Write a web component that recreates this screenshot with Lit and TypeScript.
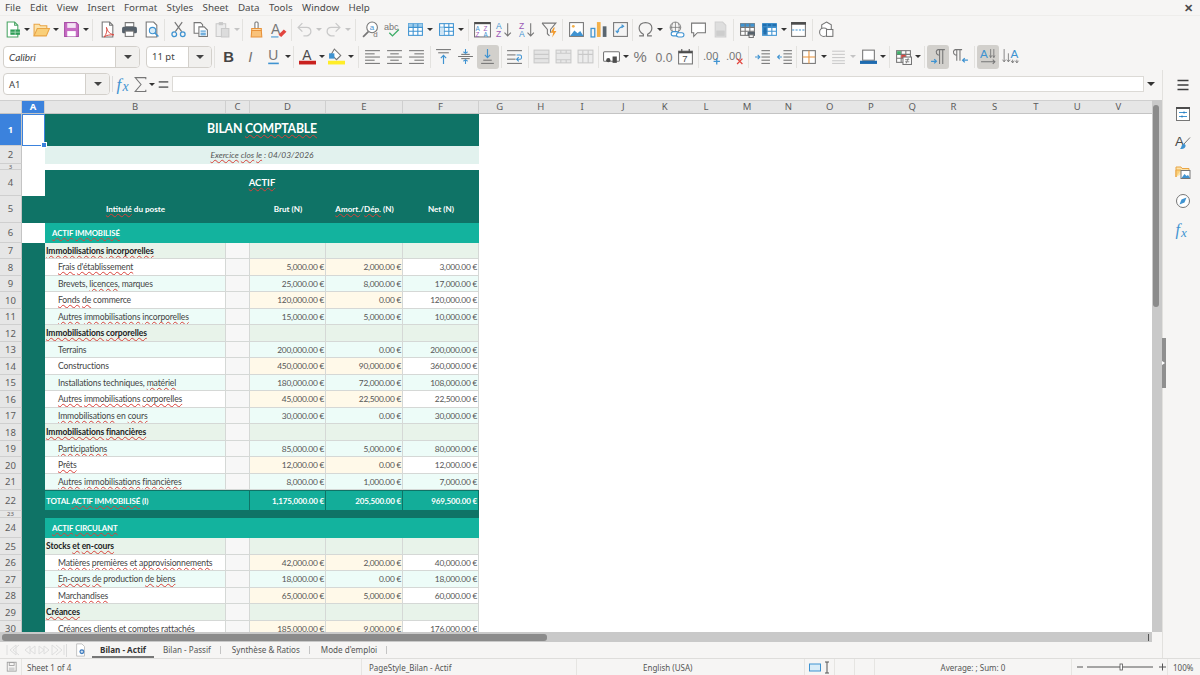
import { LitElement, html, css, svg } from "lit";
import { customElement } from "lit/decorators.js";

const GR = "#767676";
const LT = "#c9c9c9";
const BL = "#3f93d1";
const txt = (x: number, y: number, s: string, size: number, fill = GR, weight = 400, style = "normal", family = "Liberation Sans") =>
  svg`<text x=${x} y=${y} font-size=${size} fill=${fill} font-weight=${weight} font-style=${style} font-family="${family}, sans-serif">${s}</text>`;
const lines = (x1: number, x2: number, ys: number[], c = GR) =>
  ys.map((y) => svg`<path d="M${x1} ${y}H${x2}" stroke=${c}/>`);
const gridCells = (c: string, head = "") => svg`
  <rect x="1.5" y="2.5" width="13" height="11" fill="#fff" stroke=${c}/>
  ${head ? svg`<rect x="1.5" y="2.5" width="13" height="3" fill=${head}/>` : ""}
  <path d="M1.5 6h13M1.5 9.7h13M5.8 2.5v11M10.2 2.5v11" stroke=${c}/>`;

const icons: Record<string, unknown> = {
  new: svg`<path d="M3 1h7l3 3v11H3z" fill="#fff" stroke="#4aa564"/><path d="M10 1v3h3" fill="none" stroke="#4aa564"/><rect x="6" y="8" width="9" height="5" fill="#2f9d57"/><path d="M6 10.5h9M10.5 8v5" stroke="#bfe5cb" stroke-width=".7"/>`,
  open: svg`<path d="M1 14V3h5l1 1.5h6V7" fill="#fbe3ac" stroke="#e9a545"/><path d="M1 14l3-7h11.5l-3 7z" fill="#f9cf79" stroke="#e9a545"/>`,
  save: svg`<path d="M1.5 1.5h11l2 2v11h-13z" fill="#c76cc4" stroke="#a84fa6"/><rect x="4" y="2" width="8" height="4.5" fill="#f4e4f4"/><rect x="4" y="9.5" width="8" height="5" fill="#fff"/>`,
  pdf: svg`<path d="M3 1h7l3 3v11H3z" fill="#fff" stroke=${GR}/><path d="M10 1v3h3" fill="none" stroke=${GR}/><path d="M7 6c1 3 2 6 7 7-3 0-7 0-9 2 2-3 3-6 2-9z" fill="none" stroke="#d9453d" stroke-width=".9"/>`,
  print: svg`<path d="M4 1.5h8v4H4z" fill="#fff" stroke=${GR}/><rect x="1" y="5.5" width="14" height="6" rx="1.5" fill="#56616b"/><rect x="4" y="9.5" width="8" height="5" fill="#fff" stroke=${GR}/>`,
  preview: svg`<path d="M3 1h7l3 3v11H3z" fill="#fff" stroke=${GR}/><circle cx="9" cy="9" r="3" fill="#d8ecf8" stroke=${BL}/><path d="M11 11l3.5 3.5" stroke=${BL} stroke-width="1.4"/>`,
  cut: svg`<path d="M5 10L11.5 1M11 10L4.5 1" stroke=${GR} stroke-width="1.1"/><circle cx="4" cy="12.5" r="2.2" fill="none" stroke=${BL} stroke-width="1.2"/><circle cx="12" cy="12.5" r="2.2" fill="none" stroke=${BL} stroke-width="1.2"/>`,
  copy: svg`<path d="M2 1.5h6l2 2v8H2z" fill="#fff" stroke=${GR}/><path d="M6.5 5.5h5l3 3v6h-8z" fill="#fff" stroke=${GR}/>${lines(8, 13, [9.5, 11.5, 13], BL)}`,
  paste: svg`<path d="M2 2.5h9v12H2z" fill="#ececec" stroke=${LT}/><rect x="4.5" y="1" width="4" height="3" fill=${LT}/><path d="M7 7h7v8H7z" fill="#dcdcdc" stroke=${LT}/>`,
  brush: svg`<rect x="6.5" y="1" width="3" height="6" rx="1" fill="#fff" stroke=${GR}/><path d="M3.5 7h9v2h-9z" fill="#fbd9a8" stroke="#e8923a"/><path d="M3.5 9h9l.5 6H3z" fill="#f9c27a" stroke="#e8923a"/>`,
  clear: svg`${txt(1, 12, "A", 13, GR)}<path d="M8 13l5-5 2.5 2-5 5z" fill="#e2453e"/><path d="M1 15h7" stroke=${BL}/>`,
  undo: svg`<path d="M6 2L2 6l4 4M2.5 6H10c3 0 4 2 4 4s-2 4-4 4H7" fill="none" stroke=${LT} stroke-width="1.2"/>`,
  redo: svg`<path d="M10 2l4 4-4 4M13.5 6H6C3 6 2 8 2 10s2 4 4 4h3" fill="none" stroke=${LT} stroke-width="1.2"/>`,
  find: svg`<circle cx="9.5" cy="6" r="5" fill="#fff" stroke=${GR}/><path d="M6 10l-5 5" stroke=${GR} stroke-width="1.6"/>${txt(7.3, 8, "a", 7.5, BL)}${txt(10.5, 15.5, "d", 7.5, GR)}`,
  spell: svg`${txt(0, 8, "abc", 8.5, GR)}<path d="M5 11l3 3 6-6" fill="none" stroke="#3fae69" stroke-width="1.3"/>`,
  rows: svg`${gridCells("#3f93d1", "#9ccbea")}`,
  cols: svg`${gridCells("#3f93d1")}<rect x="2" y="6" width="3.5" height="7" fill="#cfe5f5"/>`,
  sortgrid: svg`<rect x=".5" y="1.5" width="15" height="13.5" fill="#fff" stroke=${GR}/><rect x=".5" y="1" width="15" height="2" fill="#4d4d4d"/>${txt(1.5, 9, "A", 6, BL)}${txt(9, 9, "Z", 6, "#9b59b6")}${txt(1.5, 14.8, "Z", 6, "#9b59b6")}${txt(9, 14.8, "A", 6, BL)}`,
  sasc: svg`${txt(0, 7.5, "A", 8, BL)}${txt(0, 15, "Z", 8, "#9b59b6")}<path d="M11 2v12M8 11l3 3 3-3" fill="none" stroke=${GR}/>`,
  sdesc: svg`${txt(0, 7.5, "Z", 8, "#9b59b6")}${txt(0, 15, "A", 8, BL)}<path d="M11 2v12M8 11l3 3 3-3" fill="none" stroke=${GR}/>`,
  filter: svg`<path d="M1 2h13L9 8v3" fill="none" stroke=${GR}/><path d="M1 2l5 6v4l2 2" fill="none" stroke=${GR}/><path d="M12 6l-3 5h2.5l-1 4.5 4-6h-2.5l1-3.5z" fill="#f29b2e"/>`,
  image: svg`<rect x="1.5" y="1.5" width="13" height="13" fill="#fff" stroke=${GR}/><circle cx="5" cy="5" r="1.3" fill="#f3b04a"/><path d="M2 14l4-5 3 2.5 2.5-2 3 4.5z" fill=${BL}/>`,
  chart: svg`<rect x="1" y="7" width="3.5" height="8" fill="none" stroke=${BL} stroke-width="1.2"/><rect x="6.5" y="1" width="3.5" height="14" fill="#f3b04a"/><rect x="12" y="5" width="3.5" height="10" fill="#5a6670"/>`,
  pivot: svg`<rect x="1.5" y="1.5" width="13" height="13" fill="#f4f4f4" stroke=${GR}/><path d="M5 11c0-3 3-6 6-6M9 3.5L11 5 9 6.5M3.5 9L5 11l1.5-2" fill="none" stroke=${BL}/>`,
  omega: svg`<path d="M2 14h4v-1.5C3.5 11 2 9 2 6.5 2 3.5 4.5 1.5 8 1.5s6 2 6 5c0 2.5-1.5 4.5-4 6V14h4" fill="none" stroke=${GR} stroke-width="1.1"/>`,
  link: svg`<circle cx="7" cy="6" r="5" fill="none" stroke=${GR} stroke-width=".8"/><path d="M2 6h10M7 1v10M4.5 2c-1.5 2.5-1.5 5.5 0 8M9.5 2c1.5 2.5 1.5 5.5 0 8" fill="none" stroke=${GR} stroke-width=".7"/><rect x="3" y="10" width="7" height="4" rx="2" fill="#fff" stroke=${BL}/><rect x="8" y="11" width="7" height="4" rx="2" fill="#fff" stroke=${BL}/>`,
  comment: svg`<path d="M1.5 2h13v9H7l-3.5 3.5V11h-2z" fill="#fff" stroke=${GR}/>`,
  headers: svg`<path d="M3 1h7l3 3v11H3z" fill="#dedede" stroke="#d0d0d0"/><rect x="4" y="9" width="8" height="5" fill="#cdcdcd"/>`,
  printarea: svg`${gridCells(GR, "#3f93d1")}<rect x="8" y="10" width="7" height="4" rx="1" fill="#56616b"/><rect x="9.5" y="13" width="4" height="2.5" fill="#fff" stroke=${GR}/>`,
  freeze: svg`${gridCells("#3f93d1", "#1f6fb0")}<rect x="2" y="6" width="3.5" height="7" fill="#1f6fb0"/>`,
  split: svg`<rect x="1.5" y="1.5" width="13" height="13" fill="#fff" stroke=${GR}/><rect x="1" y="1" width="14" height="2.5" fill="#4d4d4d"/><path d="M2 8.5h12" stroke=${BL} stroke-dasharray="2 1.2"/>`,
  shapes: svg`<path d="M8 1l4.5 2.5v5L8 11 3.5 8.5v-5z" fill="#fff" stroke=${GR}/><circle cx="5.5" cy="10.5" r="4" fill="#fff" stroke=${GR}/><rect x="8" y="8" width="6" height="6.5" fill="#fff" stroke=${GR}/>`,
  bold: svg`${txt(3, 13.5, "B", 14, "#444", 700)}`,
  italic: svg`${txt(5, 13.5, "I", 14, GR, 400, "italic")}`,
  under: svg`${txt(3, 11.5, "U", 13, GR)}<path d="M3 14.5h10" stroke=${BL} stroke-width="1.5"/>`,
  fcolor: svg`${txt(3, 11, "A", 13, "#4a4a4a")}<rect x="0" y="12" width="16" height="3.5" fill="#c9211e"/>`,
  bcolor: svg`<path d="M6 1l6 6-4 4-5-5z" fill="#fff" stroke=${GR}/><path d="M1 5h5v5H1z" fill=${BL}/><rect x="0" y="12" width="16" height="3.5" fill="#ffed27"/>`,
  al: svg`${lines(1, 15, [2.5, 8.5, 14.5])}${lines(1, 10, [5.5, 11.5])}`,
  ac: svg`${lines(1, 15, [2.5, 8.5, 14.5])}${lines(4, 12, [5.5, 11.5])}`,
  ar: svg`${lines(1, 15, [2.5, 8.5, 14.5])}${lines(6, 15, [5.5, 11.5])}`,
  vt: svg`${lines(1, 15, [1.5])}${lines(3, 13, [4.5])}<path d="M8 15V7M5.5 9.5L8 7l2.5 2.5" fill="none" stroke=${BL} stroke-width="1.1"/>`,
  vm: svg`${lines(1, 15, [8])}${lines(4, 12, [6, 10])}<path d="M8 1v4M6 3.5L8 5l2-1.5M8 15v-4M6 12.5L8 11l2 1.5" fill="none" stroke=${BL}/>`,
  vb: svg`${lines(2, 14, [14.5])}${lines(4, 12, [11.5])}<path d="M8 1v8M5.5 6.5L8 9l2.5-2.5" fill="none" stroke=${BL} stroke-width="1.1"/>`,
  wrap: svg`${lines(1, 15, [2.5, 14.5])}${lines(1, 9, [6.5, 10.5])}<path d="M10 6.5h3.5c1.5 0 1.5 4 0 4H10M12 8.5l-2 2 2 2" fill="none" stroke=${BL}/>`,
  m1: svg`<rect x="1" y="2" width="14" height="12" fill="#e4e4e4" stroke=${LT}/><path d="M1 6h14M1 10h14" stroke=${LT}/>`,
  m2: svg`<rect x="1" y="2" width="14" height="12" fill="#e8e8e8" stroke=${LT}/><path d="M5.5 2v3M10.5 2v3M5.5 11v3M10.5 11v3M1 5h14M1 11h14" stroke=${LT}/>`,
  m3: svg`<rect x="1" y="2" width="14" height="12" fill="#ececec" stroke=${LT}/><path d="M5.5 2v12M10.5 2v12M1 6h14" stroke=${LT}/>`,
  curr: svg`<rect x=".5" y="3.5" width="15" height="9" rx="1" fill="#fff" stroke=${GR}/><circle cx="5" cy="11.5" r="2" fill="#4d4d4d"/><rect x="9" y="8" width="4" height="6" fill="#4d4d4d"/>`,
  pct: svg`${txt(0.5, 13, "%", 14, GR)}`,
  num: svg`<g transform="translate(0 1)">${txt(0.5, 12, "0.0", 11.5, GR)}</g>`,
  date: svg`<rect x="1.5" y="3" width="13" height="12" fill="#fff" stroke=${GR}/><rect x="1.5" y="3" width="13" height="2" fill="#4d4d4d"/><path d="M4.5 1v3M11.5 1v3" stroke="#4d4d4d"/>${txt(5, 13.5, "7", 9, "#4d4d4d")}`,
  dadd: svg`${txt(-1, 11, ".00", 10.5, GR)}<path d="M12 9.5v6M9 12.5h6" stroke=${BL} stroke-width="1.2"/>`,
  drem: svg`${txt(-1, 11, ".00", 10.5, GR)}<path d="M9.5 10l5 5M14.5 10l-5 5" stroke="#e2453e" stroke-width="1.2"/>`,
  ind: svg`${lines(7, 15, [2.5, 5.5, 8.5, 11.5, 14.5])}<path d="M1 8.5h4M3.5 6.5l2 2-2 2" fill="none" stroke=${BL}/>`,
  outd: svg`${lines(7, 15, [2.5, 5.5, 8.5, 11.5, 14.5])}<path d="M5.5 8.5h-4M3.5 6.5l-2 2 2 2" fill="none" stroke=${BL}/>`,
  border: svg`<rect x="1.5" y="2.5" width="12" height="12" fill="#fff" stroke=${GR}/><path d="M7.5 2.5v12M1.5 8.5h12" stroke="#e8923a"/>`,
  bstyle: svg`${lines(2, 14, [3, 6, 9, 12, 14.5], LT)}`,
  bcol: svg`<rect x="2.5" y="2" width="11" height="9.5" fill="#fff" stroke=${GR}/><rect x="0" y="12" width="16" height="3" fill="#1e6bb0"/>`,
  cond: svg`${gridCells(GR)}<rect x="2" y="3" width="3.5" height="3" fill="#3fae69"/><rect x="6" y="6.5" width="4" height="3" fill="#e2453e"/><rect x="7.5" y="8.5" width="8" height="7" fill="#fff" stroke=${GR}/><path d="M9.5 11h4M9.5 13h4M10.5 14.5l2-5" stroke=${GR} stroke-width=".8"/>`,
  ltr: svg`<path d="M9 15V1.5H8C5.5 1.5 5 5 7.5 6.5H9M12 15V1.5M7 1.5h7" fill="none" stroke=${GR}/><path d="M1 12.5h5M4 10.5l2 2-2 2" fill="none" stroke=${BL} stroke-width="1.2"/>`,
  rtl: svg`<path d="M4.5 12V1.5h-1C1 1.5.5 5 3 6.5h1.5M7.5 12V1.5M2.5 1.5h7" fill="none" stroke=${GR}/><path d="M15 11.5h-5M12 9.5l-2 2 2 2" fill="none" stroke=${BL} stroke-width="1.2"/>`,
  tdir: svg`${txt(0, 9, "A", 11, BL)}<path d="M10 1v8M13 1v8M9 7l1 2 1-2M12 7l1 2 1-2" fill="none" stroke=${GR} stroke-width=".8"/><path d="M1 13h13M12 11l2 2-2 2" fill="none" stroke=${GR}/>`,
  vert: svg`${txt(8, 9.5, "A", 11, BL)}<path d="M2 1v12M6 5v8M10 11v3M14 11v3M.5 11L2 13l1.5-2M4.5 11L6 13l1.5-2M8.5 12l1.5 2 1.5-2M12.5 12l1.5 2 1.5-2" fill="none" stroke=${GR} stroke-width=".8"/>`,
  burger: svg`<path d="M2.5 3.5h11M2.5 8h11M2.5 12.5h11" stroke="#3d3d3d" stroke-width="1.5"/>`,
  props: svg`<rect x="1.5" y="1.5" width="13" height="13" fill="#fff" stroke=${GR}/><rect x="1" y="1" width="14" height="2" fill="#4d4d4d"/><path d="M4 6.5h8M4 10.5h8" stroke=${BL}/><path d="M9 5.5v2M7 9.5v2" stroke="#1f6fb0"/>`,
  styles: svg`${txt(0, 11, "A", 13.5, "#4a4a4a")}<path d="M15 2.5L9 9" stroke=${GR}/><path d="M9 8.5c-3 1-2 4-4 5.5 3 .5 6-1 5.5-4z" fill=${BL}/>`,
  gallery: svg`<path d="M1 13V3h5l1 1.5h7V6" fill="#fbe3ac" stroke="#e9a545"/><path d="M1 13V6h5" fill="#f9cf79" stroke="#e9a545"/><rect x="6" y="6.5" width="9" height="8" fill="#fff" stroke=${GR}/><path d="M6.5 14l3-4 2 2 1.5-1 2 3z" fill=${BL}/>`,
  nav: svg`<circle cx="8" cy="8" r="6.5" fill="#fff" stroke=${GR}/><path d="M11.5 4.5L9.5 9.5 4.5 11.5l2-5z" fill=${BL}/>`,
  fx: svg`${txt(0.5, 13, "f", 16, BL, 400, "italic", "Liberation Serif")}${txt(6, 14.5, "x", 13, BL, 400, "italic", "Liberation Serif")}`,
  sigma: svg`<path d="M13 3V1.5H3L8.5 8 3 14.5h10V13" fill="none" stroke=${GR}/>`,
  eq: svg`<path d="M3.5 5.5h9M3.5 10.5h9" stroke=${GR} stroke-width="1.6"/>`,
  doc: svg`<rect x="1.5" y="1.5" width="11" height="11" fill="none" stroke="#9a9a9a"/><rect x="4" y="2" width="6" height="3.5" fill="none" stroke="#9a9a9a"/><rect x="3.5" y="8" width="7" height="4.5" fill="#d0d0d0"/>`,
  sheetadd: svg`<path d="M3 1h6l3 3v11H3z" fill="#fff" stroke="#bcbcbc"/><circle cx="9" cy="10" r="2.8" fill="#3b79bd"/><path d="M7.5 10h3M9 8.5v3" stroke="#fff" stroke-width=".9"/>`,
};

const toolbarOne: (string | number)[] = [
  "new", "d", "open", "d", "save", "d", 6.5, "pdf", "print", "preview", 5, "cut", "copy", "paste", "x", 4.5,
  "brush", "clear", 4, "undo", "x", "redo", "x", 7, "find", "spell", 1, "rows", "d", 2, "cols", "d", 6,
  "sortgrid", "sasc", 1, "sdesc", "filter", 5, "image", "chart", "pivot", 3, "omega", "d", 1.5, "link",
  "comment", "headers", 5, "printarea", "freeze", "d", "split", 5.5, "shapes",
];
const toolbarTwo: (string | number)[] = [
  5, "bold", 1, "italic", "under", "d", 4.5, "fcolor", "d", "bcolor", "d", 6.5, "al", "ac", "ar", 5, "vt", "vm",
  "vb", 5, "wrap", 5, "m1", "m2", "m3", 4, "curr", "d", "pct", "num", "date", 5, "dadd", 1, "drem", 5, "ind",
  "outd", 3, "border", "d", "bstyle", "x", "bcol", "d", 5.5, "cond", "d", 5.5, "ltr", "rtl", 6, "tdir", "vert",
];
const active = ["vb", "ltr", "tdir"];

type Row = { n: number; h: number; kind: string; label?: string; vals?: string[]; aDark?: boolean };

const item = (n: number, label: string, ...vals: string[]): Row => ({ n, h: 16.5, kind: "item", label, vals });
const group = (n: number, label: string): Row => ({ n, h: 16.5, kind: "group", label });

const rows: Row[] = [
  { n: 1, h: 31.5, kind: "title", label: "BILAN ~COMPTABLE~" },
  { n: 2, h: 18.3, kind: "sub", label: "~Exercice~ ~clos~ ~le~ : 04/03/2026" },
  { n: 3, h: 6.5, kind: "blank" },
  { n: 4, h: 25.4, kind: "actif", label: "~ACTIF~" },
  { n: 5, h: 27.3, kind: "head", label: "~Intitulé~ du poste", vals: ["Brut (N)", "~Amort.~/~Dép.~ (N)", "Net (N)"] },
  { n: 6, h: 20, kind: "sec", label: "~ACTIF~ ~IMMOBILISÉ~" },
  group(7, "~Immobilisations~ ~incorporelles~"),
  item(8, "~Frais~ ~d'établissement~", "5,000.00 €", "2,000.00 €", "3,000.00 €"),
  item(9, "Brevets, ~licences~, marques", "25,000.00 €", "8,000.00 €", "17,000.00 €"),
  item(10, "~Fonds~ ~de~ commerce", "120,000.00 €", "0.00 €", "120,000.00 €"),
  item(11, "~Autres~ ~immobilisations~ ~incorporelles~", "15,000.00 €", "5,000.00 €", "10,000.00 €"),
  group(12, "~Immobilisations~ ~corporelles~"),
  item(13, "Terrains", "200,000.00 €", "0.00 €", "200,000.00 €"),
  item(14, "Constructions", "450,000.00 €", "90,000.00 €", "360,000.00 €"),
  item(15, "Installations techniques, ~matériel~", "180,000.00 €", "72,000.00 €", "108,000.00 €"),
  item(16, "~Autres~ ~immobilisations~ ~corporelles~", "45,000.00 €", "22,500.00 €", "22,500.00 €"),
  item(17, "~Immobilisations~ en ~cours~", "30,000.00 €", "0.00 €", "30,000.00 €"),
  group(18, "~Immobilisations~ ~financières~"),
  item(19, "~Participations~", "85,000.00 €", "5,000.00 €", "80,000.00 €"),
  item(20, "~Prêts~", "12,000.00 €", "0.00 €", "12,000.00 €"),
  item(21, "~Autres~ ~immobilisations~ ~financières~", "8,000.00 €", "1,000.00 €", "7,000.00 €"),
  { n: 22, h: 20.5, kind: "total", label: "TOTAL ~ACTIF~ ~IMMOBILISÉ~ (I)", vals: ["1,175,000.00 €", "205,500.00 €", "969,500.00 €"] },
  { n: 23, h: 6.7, kind: "bar" },
  { n: 24, h: 20.6, kind: "sec", label: "~ACTIF~ ~CIRCULANT~", aDark: true },
  group(25, "Stocks ~et~ ~en-cours~"),
  item(26, "~Matières~ ~premières~ ~et~ ~approvisionnements~", "42,000.00 €", "2,000.00 €", "40,000.00 €"),
  item(27, "~En-cours~ ~de~ production ~de~ ~biens~", "18,000.00 €", "0.00 €", "18,000.00 €"),
  item(28, "~Marchandises~", "65,000.00 €", "5,000.00 €", "60,000.00 €"),
  group(29, "~Créances~"),
  item(30, "~Créances~ clients ~et~ ~comptes~ ~rattachés~", "185,000.00 €", "9,000.00 €", "176,000.00 €"),
];

const letters = "GHIJKLMNOPQRSTUV".split("");

@customElement("app-root")
export class AppRoot extends LitElement {
  static styles = css`
    :host {
      display: block;
      width: 1200px;
      height: 675px;
      font-family: "Noto Sans", sans-serif;
      color: #3d3d3d;
    }
    .app {
      height: 675px;
      display: flex;
      flex-direction: column;
      overflow: hidden;
      background: #f6f5f4;
    }
    .ic {
      width: 17px;
      height: 17px;
      display: block;
      overflow: visible;
    }
    .menu {
      height: 16px;
      display: flex;
      align-items: center;
      padding-left: 5px;
      gap: 9.3px;
      font-size: 9.8px;
      color: #4a4a4a;
      border-bottom: 1px solid #eeedeb;
      box-sizing: border-box;
    }
    .close {
      margin-left: auto;
      margin-right: 7px;
      font-size: 11px;
      font-weight: 700;
    }
    .tb {
      display: flex;
      align-items: center;
      flex-shrink: 0;
    }
    .tb1 {
      height: 27px;
      padding-left: 1px;
    }
    .tb2 {
      height: 27px;
      padding-left: 3px;
    }
    .btn {
      width: 22px;
      height: 24px;
      display: flex;
      align-items: center;
      justify-content: center;
      border-radius: 3px;
      flex-shrink: 0;
    }
    .btn.on {
      background: #d2d0cc;
    }
    .dd {
      width: 7.5px;
      height: 24px;
      display: flex;
      align-items: center;
      justify-content: center;
      flex-shrink: 0;
    }
    .dd::after {
      content: "";
      border-left: 3px solid transparent;
      border-right: 3px solid transparent;
      border-top: 3.5px solid #333;
    }
    .dd.off::after {
      border-top-color: #c4c4c4;
    }
    .sep {
      display: flex;
      justify-content: center;
      flex-shrink: 0;
    }
    .sep.line::after {
      content: "";
      width: 1px;
      height: 22px;
      background: #e3e2df;
    }
    .combo {
      height: 22px;
      box-sizing: border-box;
      border: 1px solid #d3d0cb;
      border-radius: 4px;
      background: #fff;
      display: flex;
      align-items: center;
      font-size: 9.5px;
      overflow: hidden;
      flex-shrink: 0;
      color: #444;
    }
    .combo span {
      flex: 1;
      padding-left: 5px;
    }
    .combo .arrow {
      flex: none;
      padding: 0;
      height: 100%;
      background: #f1f0ee;
      border-left: 1px solid #d3d0cb;
      display: flex;
      align-items: center;
      justify-content: center;
    }
    .combo .arrow::after {
      content: "";
      border-left: 4px solid transparent;
      border-right: 4px solid transparent;
      border-top: 4.5px solid #444;
    }
    .font {
      width: 137px;
      margin-right: 6px;
      font-family: "Lato", sans-serif;
      font-style: italic;
      font-size: 10px;
    }
    .font .arrow {
      width: 23px;
    }
    .size {
      width: 66px;
    }
    .size .arrow {
      width: 22px;
    }
    .main {
      flex: 1;
      min-height: 0;
      display: flex;
    }
    .left {
      width: 1162px;
      display: flex;
      flex-direction: column;
    }
    .fbar {
      height: 30px;
      box-sizing: border-box;
      display: flex;
      align-items: center;
      padding: 0 0 2px 3px;
      flex-shrink: 0;
    }
    .name {
      width: 107px;
      margin-right: 2px;
    }
    .name .arrow {
      width: 23px;
    }
    .fbar .sep {
      width: 1px;
      height: 16px;
      background: #ddd;
      margin-right: 3px;
    }
    .fbtn {
      width: 16px;
      display: flex;
      justify-content: center;
    }
    .input {
      width: 972px;
      height: 16px;
      box-sizing: border-box;
      background: #fff;
      border: 1px solid #dcdad6;
    }
    .fdrop {
      width: 15px;
      display: flex;
      justify-content: center;
    }
    .fdrop::after {
      content: "";
      border-left: 4px solid transparent;
      border-right: 4px solid transparent;
      border-top: 4px solid #333;
    }
    .view {
      height: 532px;
      display: flex;
      flex-shrink: 0;
    }
    .sheet {
      width: 1152px;
      overflow: hidden;
      background: #fff;
      font-family: "Lato", sans-serif;
    }
    .cols,
    .row {
      display: grid;
      grid-template-columns: 22px 23px 181px 24px 76px 77px 76px 1fr;
    }
    .cols {
      height: 14px;
      background: #e6e6e6;
      font-family: "Noto Sans", sans-serif;
      font-size: 9.5px;
      color: #5c5c5c;
      box-sizing: border-box;
      border-top: 1px solid #cfcfcf;
      border-bottom: 1px solid #c4c4c4;
    }
    .cols > div {
      border-right: 1px solid #cfcfcf;
      text-align: center;
      line-height: 12px;
      box-sizing: border-box;
    }
    .cols .sel {
      background: #3b82dd;
      color: #fff;
      font-weight: 700;
    }
    .more {
      display: grid;
      grid-template-columns: repeat(16, 41.25px) 1fr;
      border-right: 0 !important;
    }
    .rows {
      position: relative;
    }
    .row > div {
      box-sizing: border-box;
      display: flex;
      align-items: center;
      min-width: 0;
      white-space: nowrap;
      overflow: hidden;
    }
    .row .rh {
      background: #e6e6e6;
      border-right: 1px solid #c4c4c4;
      border-bottom: 1px solid #cfcfcf;
      justify-content: center;
      font-family: "Noto Sans", sans-serif;
      font-size: 9.5px;
      color: #5c5c5c;
    }
    .row .rh.tiny {
      font-size: 6px;
      line-height: 6px;
    }
    .row .rh.sel {
      background: #3b82dd;
      color: #fff;
      font-weight: 700;
    }
    .dark {
      background: #0f7366;
    }
    .teal {
      background: #13b39e;
    }
    .wide {
      grid-column: span 5;
    }
    .white {
      color: #fff;
      font-weight: 700;
    }
    .title {
      font-size: 12.3px;
      letter-spacing: -0.2px;
      justify-content: center;
      padding-bottom: 2px;
    }
    .sub {
      background: #e2f2ee;
      justify-content: center;
      font-size: 8.4px;
      font-style: italic;
      color: #555;
    }
    .actif {
      font-size: 9.5px;
      justify-content: center;
    }
    .hcell {
      font-size: 8.1px;
      justify-content: center;
    }
    .sec {
      font-size: 7.8px;
      letter-spacing: -0.1px;
      padding-left: 7px;
    }
    .row .cell {
      font-size: 8.6px;
      letter-spacing: -0.15px;
      color: #444;
      border-bottom: 1px solid #d5d8d6;
      border-right: 1px solid #d5d8d6;
    }
    .cell.lab {
      padding-left: 13px;
    }
    .row .cell.grp {
      background: #e8f3ea;
      color: #222;
      font-weight: 700;
      font-size: 8.5px;
      letter-spacing: -0.1px;
      padding-left: 1px;
    }
    .cell.fill {
      background: #e8f3ea;
    }
    .cell.c {
      background: #f7f7f7;
    }
    .row .cell.num {
      justify-content: flex-end;
      padding-right: 1px;
      font-size: 8.4px;
      letter-spacing: -0.25px;
      color: #555;
    }
    .mint {
      background: #edfcf8;
    }
    .cream {
      background: #fff9e9;
    }
    .plain {
      background: #fff;
    }
    .row .tot {
      background: #13ad99;
      color: #fff;
      font-weight: 700;
      font-size: 8px;
      letter-spacing: -0.15px;
      border-top: 1.5px solid #0f7366;
      border-bottom: 1.5px solid #0f7366;
      border-right: 1.5px solid #0f7366;
    }
    .tot.lab2 {
      padding-left: 1px;
      grid-column: span 2;
    }
    .tot.num {
      justify-content: flex-end;
      padding-right: 1px;
    }
    .bad {
      text-decoration: underline wavy #d8413a 1px;
      text-decoration-skip-ink: none;
      text-underline-offset: 0.5px;
    }
    .cursor {
      position: absolute;
      left: 22px;
      top: 0;
      width: 23px;
      height: 31.5px;
      box-sizing: border-box;
      border: 1px solid #3b82dd;
    }
    .cursor::after {
      content: "";
      position: absolute;
      right: -3px;
      bottom: -3px;
      width: 4px;
      height: 4px;
      background: #3b82dd;
      border: 1px solid #fff;
    }
    .vs {
      width: 10px;
      background: #c9c9c9;
      padding: 5px 3px 325px 1px;
      box-sizing: border-box;
    }
    .vs div {
      height: 100%;
      background: #8b8b8b;
      border-radius: 3px;
    }
    .hs {
      width: 1152px;
      height: 10px;
      flex-shrink: 0;
      background: #c9c9c9;
      padding: 2px 0 1px 2px;
      box-sizing: border-box;
      display: flex;
      justify-content: space-between;
    }
    .hs .thumb {
      width: 545px;
      background: #8b8b8b;
      border-radius: 3px;
    }
    .hs .tick {
      width: 1px;
      margin-right: 3px;
      background: #555;
    }
    .tabs {
      height: 16px;
      flex-shrink: 0;
      display: flex;
      align-items: center;
      font-size: 8.1px;
      color: #555;
    }
    .navs {
      margin-left: 6px;
      width: 60px;
      height: 14px;
      display: block;
    }
    .tabsep {
      width: 1px;
      height: 13px;
      background: #dcdcdc;
    }
    .tabs .ic {
      width: 14px;
      height: 14px;
      margin: 0 4px 0 7px;
    }
    .tab {
      height: 16px;
      box-sizing: border-box;
      line-height: 15px;
      padding: 0 9px;
      position: relative;
    }
    .tab.on {
      color: #333;
      font-weight: 700;
      padding: 0 8px;
      border-bottom: 2px solid #777;
    }
    .tab.rule {
      padding-right: 10px;
      margin-right: 2px;
    }
    .tab.rule::after {
      content: "";
      position: absolute;
      right: 0;
      top: 4px;
      width: 1px;
      height: 8px;
      background: #c4c4c4;
    }
    .side {
      flex: 1;
      border-left: 1px solid #e2e1de;
      display: flex;
      flex-direction: column;
      align-items: center;
      gap: 13px;
      padding-top: 7px;
      position: relative;
    }
    .side .ic {
      width: 16px;
      height: 16px;
      margin-left: 3px;
    }
    .grip {
      position: absolute;
      left: -1px;
      top: 268px;
      width: 4px;
      height: 50px;
      background: #8f8f8f;
      display: flex;
      align-items: center;
    }
    .grip::after {
      content: "";
      border-left: 3px solid #fff;
      border-top: 2.5px solid transparent;
      border-bottom: 2.5px solid transparent;
    }
    .status {
      height: 17px;
      flex-shrink: 0;
      display: flex;
      border-top: 1px solid #dedddb;
      box-sizing: border-box;
      font-size: 8px;
      color: #555;
    }
    .status > div {
      box-sizing: border-box;
      border-right: 1px solid #e6e5e2;
      display: flex;
      align-items: center;
      white-space: nowrap;
    }
    .status .ic {
      width: 13px;
      height: 13px;
    }
    .s1 {
      width: 22px;
      padding-left: 6px;
    }
    .s2 {
      width: 340px;
      padding-left: 5px;
    }
    .s3 {
      width: 215px;
      padding-left: 7px;
    }
    .s4 {
      width: 228px;
      padding-left: 66px;
    }
    .s5 {
      width: 30px;
      justify-content: center;
    }
    .s6 {
      width: 20px;
    }
    .s7 {
      width: 197px;
      justify-content: center;
    }
    .s8 {
      width: 96px;
      padding-left: 4px;
    }
    .s8 svg {
      width: 90px;
      height: 10px;
      display: block;
    }
    .s9 {
      flex: 1;
      border-right: 0 !important;
      padding-left: 5px;
    }
    .s5 svg {
      width: 24px;
      height: 13px;
      display: block;
    }
  `;

  private icon(name: string) {
    return html`<svg class="ic" viewBox="0 0 16 16">${icons[name]}</svg>`;
  }

  // numbers in a toolbar list are spacers, wide ones carry a divider
  private toolbar(list: (string | number)[]) {
    return list.map((it) => {
      if (typeof it === "number") {
        return html`<div class="sep ${it >= 3 ? "line" : ""}" style="width:${it}px"></div>`;
      }
      if (it === "d") return html`<div class="dd"></div>`;
      if (it === "x") return html`<div class="dd off"></div>`;
      return html`<div class="btn ${active.includes(it) ? "on" : ""}">${this.icon(it)}</div>`;
    });
  }

  // words between ~ get the spell check underline
  private spell(s = "") {
    return html`<span
      >${s.split(/(~[^~]+~)/).map((p) =>
        p.startsWith("~") ? html`<span class="bad">${p.slice(1, -1)}</span>` : p
      )}</span
    >`;
  }

  private rowCells(r: Row) {
    switch (r.kind) {
      case "title":
        return html`<div></div><div class="wide dark white title">${this.spell(r.label)}</div>`;
      case "sub":
        return html`<div></div><div class="wide sub">${this.spell(r.label)}</div>`;
      case "blank":
        return html`<div></div><div class="wide"></div>`;
      case "actif":
        return html`<div></div><div class="wide dark white actif">${this.spell(r.label)}</div>`;
      case "head":
        return html`<div class="dark"></div>
          <div class="dark white hcell">${this.spell(r.label)}</div>
          <div class="dark"></div>
          ${r.vals!.map((v) => html`<div class="dark white hcell">${this.spell(v)}</div>`)}`;
      case "sec":
        return html`<div class=${r.aDark ? "dark" : ""}></div>
          <div class="wide teal white sec">${this.spell(r.label)}</div>`;
      case "group":
        return html`<div class="dark"></div>
          <div class="cell grp">${this.spell(r.label)}</div>
          <div class="cell c"></div>
          <div class="cell fill"></div>
          <div class="cell fill"></div>
          <div class="cell fill"></div>`;
      case "item": {
        const even = r.n % 2 === 0;
        const [a, b, c] = r.vals!;
        return html`<div class="dark"></div>
          <div class="cell lab ${even ? "plain" : "mint"}">${this.spell(r.label)}</div>
          <div class="cell c"></div>
          <div class="cell num ${even ? "cream" : "mint"}">${a}</div>
          <div class="cell num ${even ? "cream" : "mint"}">${b}</div>
          <div class="cell num ${even ? "plain" : "mint"}">${c}</div>`;
      }
      case "total":
        return html`<div class="dark"></div>
          <div class="tot lab2">${this.spell(r.label)}</div>
          ${r.vals!.map((v) => html`<div class="tot num">${v}</div>`)}`;
      case "bar":
        return html`<div class="dark"></div><div class="wide dark"></div>`;
    }
    return "";
  }

  render() {
    return html`
      <div class="app">
        <div class="menu">
          ${["File", "Edit", "View", "Insert", "Format", "Styles", "Sheet", "Data", "Tools", "Window", "Help"].map(
            (m) => html`<span>${m}</span>`
          )}
          <span class="close">✕</span>
        </div>
        <div class="tb tb1">${this.toolbar(toolbarOne)}</div>
        <div class="tb tb2">
          <div class="combo font"><span>Calibri</span><span class="arrow"></span></div>
          <div class="combo size"><span>11 pt</span><span class="arrow"></span></div>
          ${this.toolbar(toolbarTwo)}
        </div>
        <div class="main">
          <div class="left">
            <div class="fbar">
              <div class="combo name"><span>A1</span><span class="arrow"></span></div>
              <div class="sep"></div>
              <div class="fbtn">${this.icon("fx")}</div>
              <div class="fbtn">${this.icon("sigma")}</div>
              <div class="dd"></div>
              <div class="fbtn">${this.icon("eq")}</div>
              <div class="input"></div>
              <div class="fdrop"></div>
            </div>
            <div class="view">
              <div class="sheet">
                <div class="cols">
                  <div></div>
                  <div class="sel">A</div>
                  <div>B</div>
                  <div>C</div>
                  <div>D</div>
                  <div>E</div>
                  <div>F</div>
                  <div class="more">
                    ${letters.map((l) => html`<div>${l}</div>`)}
                    <div></div>
                  </div>
                </div>
                <div class="rows">
                  ${rows.map(
                    (r) => html`<div class="row" style="height:${r.h}px">
                      <div class="rh ${r.n === 1 ? "sel" : ""} ${r.h < 7 ? "tiny" : ""}">${r.n}</div>
                      ${this.rowCells(r)}
                    </div>`
                  )}
                  <div class="cursor"></div>
                </div>
              </div>
              <div class="vs"><div></div></div>
            </div>
            <div class="hs"><div class="thumb"></div><div class="tick"></div></div>
            <div class="tabs">
              <svg class="navs" viewBox="0 0 60 14">
                <g fill="none" stroke="#dedede">
                  <path d="M1 2v10M10 2l-6 5 6 5zM13 2l-6 5 6 5" />
                  <path d="M24 3l-5 4 5 4zM29 3l-5 4 5 4z" />
                  <path d="M33 3l5 4-5 4zM38 3l5 4-5 4z" />
                  <path d="M46 2l6 5-6 5zM50 2l6 5-6 5M58 2v10" />
                </g>
              </svg>
              <div class="tabsep"></div>
              ${this.icon("sheetadd")}
              <div class="tab on">Bilan - Actif</div>
              <div class="tab rule">Bilan - Passif</div>
              <div class="tab rule">Synthèse &amp; Ratios</div>
              <div class="tab rule">Mode d'emploi</div>
            </div>
          </div>
          <div class="side">
            ${["burger", "props", "styles", "gallery", "nav", "fx"].map((n) => this.icon(n))}
            <div class="grip"></div>
          </div>
        </div>
        <div class="status">
          <div class="s1">${this.icon("doc")}</div>
          <div class="s2">Sheet 1 of 4</div>
          <div class="s3">PageStyle_Bilan - Actif</div>
          <div class="s4">English (USA)</div>
          <div class="s5">
            <svg viewBox="0 0 24 13">
              <rect x="1.5" y="3" width="11" height="7" fill="#d8ecf8" stroke="#3f93d1" />
              <path d="M17 1h4M19 1v11M17 12h4" fill="none" stroke="#555" />
            </svg>
          </div>
          <div class="s6"></div>
          <div class="s6"></div>
          <div class="s7">Average: ; Sum: 0</div>
          <div class="s8">
            <svg viewBox="0 0 90 10">
              <path d="M1 5h6M11 5h66M83 5h7M86.5 1.5v7" stroke="#555" />
              <rect x="44" y="2" width="2.5" height="6" fill="#fff" stroke="#555" stroke-width=".8" />
            </svg>
          </div>
          <div class="s9">100%</div>
        </div>
      </div>
    `;
  }
}
